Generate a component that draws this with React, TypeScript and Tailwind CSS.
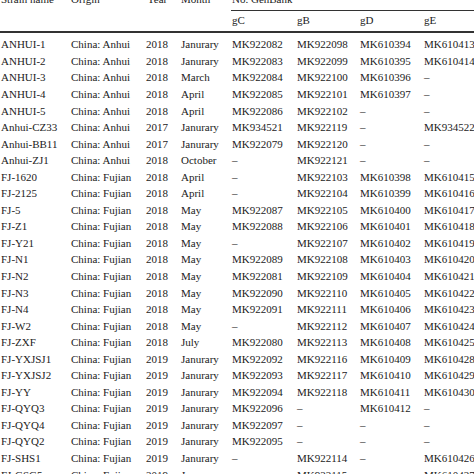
import React from 'react';

type Row = [string, string, string, string, string, string, string, string];

const rows: Row[] = [
  ['ANHUI-1', 'China: Anhui', '2018', 'Janurary', 'MK922082', 'MK922098', 'MK610394', 'MK610413'],
  ['ANHUI-2', 'China: Anhui', '2018', 'Janurary', 'MK922083', 'MK922099', 'MK610395', 'MK610414'],
  ['ANHUI-3', 'China: Anhui', '2018', 'March', 'MK922084', 'MK922100', 'MK610396', '–'],
  ['ANHUI-4', 'China: Anhui', '2018', 'April', 'MK922085', 'MK922101', 'MK610397', '–'],
  ['ANHUI-5', 'China: Anhui', '2018', 'April', 'MK922086', 'MK922102', '–', '–'],
  ['Anhui-CZ33', 'China: Anhui', '2017', 'Janurary', 'MK934521', 'MK922119', '–', 'MK934522'],
  ['Anhui-BB11', 'China: Anhui', '2017', 'Janurary', 'MK922079', 'MK922120', '–', '–'],
  ['Anhui-ZJ1', 'China: Anhui', '2018', 'October', '–', 'MK922121', '–', '–'],
  ['FJ-1620', 'China: Fujian', '2018', 'April', '–', 'MK922103', 'MK610398', 'MK610415'],
  ['FJ-2125', 'China: Fujian', '2018', 'April', '–', 'MK922104', 'MK610399', 'MK610416'],
  ['FJ-5', 'China: Fujian', '2018', 'May', 'MK922087', 'MK922105', 'MK610400', 'MK610417'],
  ['FJ-Z1', 'China: Fujian', '2018', 'May', 'MK922088', 'MK922106', 'MK610401', 'MK610418'],
  ['FJ-Y21', 'China: Fujian', '2018', 'May', '–', 'MK922107', 'MK610402', 'MK610419'],
  ['FJ-N1', 'China: Fujian', '2018', 'May', 'MK922089', 'MK922108', 'MK610403', 'MK610420'],
  ['FJ-N2', 'China: Fujian', '2018', 'May', 'MK922081', 'MK922109', 'MK610404', 'MK610421'],
  ['FJ-N3', 'China: Fujian', '2018', 'May', 'MK922090', 'MK922110', 'MK610405', 'MK610422'],
  ['FJ-N4', 'China: Fujian', '2018', 'May', 'MK922091', 'MK922111', 'MK610406', 'MK610423'],
  ['FJ-W2', 'China: Fujian', '2018', 'May', '–', 'MK922112', 'MK610407', 'MK610424'],
  ['FJ-ZXF', 'China: Fujian', '2018', 'July', 'MK922080', 'MK922113', 'MK610408', 'MK610425'],
  ['FJ-YXJSJ1', 'China: Fujian', '2019', 'Janurary', 'MK922092', 'MK922116', 'MK610409', 'MK610428'],
  ['FJ-YXJSJ2', 'China: Fujian', '2019', 'Janurary', 'MK922093', 'MK922117', 'MK610410', 'MK610429'],
  ['FJ-YY', 'China: Fujian', '2019', 'Janurary', 'MK922094', 'MK922118', 'MK610411', 'MK610430'],
  ['FJ-QYQ3', 'China: Fujian', '2019', 'Janurary', 'MK922096', '–', 'MK610412', '–'],
  ['FJ-QYQ4', 'China: Fujian', '2019', 'Janurary', 'MK922097', '–', '–', '–'],
  ['FJ-QYQ2', 'China: Fujian', '2019', 'Janurary', 'MK922095', '–', '–', '–'],
  ['FJ-SHS1', 'China: Fujian', '2019', 'Janurary', '–', 'MK922114', '–', 'MK610426'],
  ['FJ-GSG5', 'China: Fujian', '2019', 'Janurary', '–', 'MK922115', '–', 'MK610427'],
];

const cols = 'grid grid-cols-[70px_75px_35px_51px_65px_63px_64px_1fr] h-[16.56px] leading-[16.56px] whitespace-nowrap';

export default function App() {
  return (
    <div
      className="w-[474px] h-[474px] overflow-hidden bg-white text-[11px] text-[#222]"
      style={{ fontFamily: '"Liberation Serif", "Times New Roman", serif' }}
    >
      <div className="mt-[-9px] pl-px">
        {/* Header */}
        <div className={cols}>
          <div>Strain name</div>
          <div>Origin</div>
          <div className="pl-[1px]">Year</div>
          <div>Month</div>
          <div className="col-span-4">No. GenBank</div>
        </div>
        <div className="ml-[230px] mt-[2.5px] h-px bg-[#333]" />
        <div className={`${cols} mt-px`}>
          <div className="col-span-4" />
          <div>gC</div>
          <div>gB</div>
          <div>gD</div>
          <div>gE</div>
        </div>
        <div className="-ml-px mt-[2.5px] h-[2px] bg-[#333]" />

        {/* Body */}
        <div className="pt-[3.25px]">
          {rows.map((r) => (
            <div key={r[0]} className={cols}>
              {r.map((c, i) => (
                <div key={i}>{c}</div>
              ))}
            </div>
          ))}
        </div>
      </div>
    </div>
  );
}
